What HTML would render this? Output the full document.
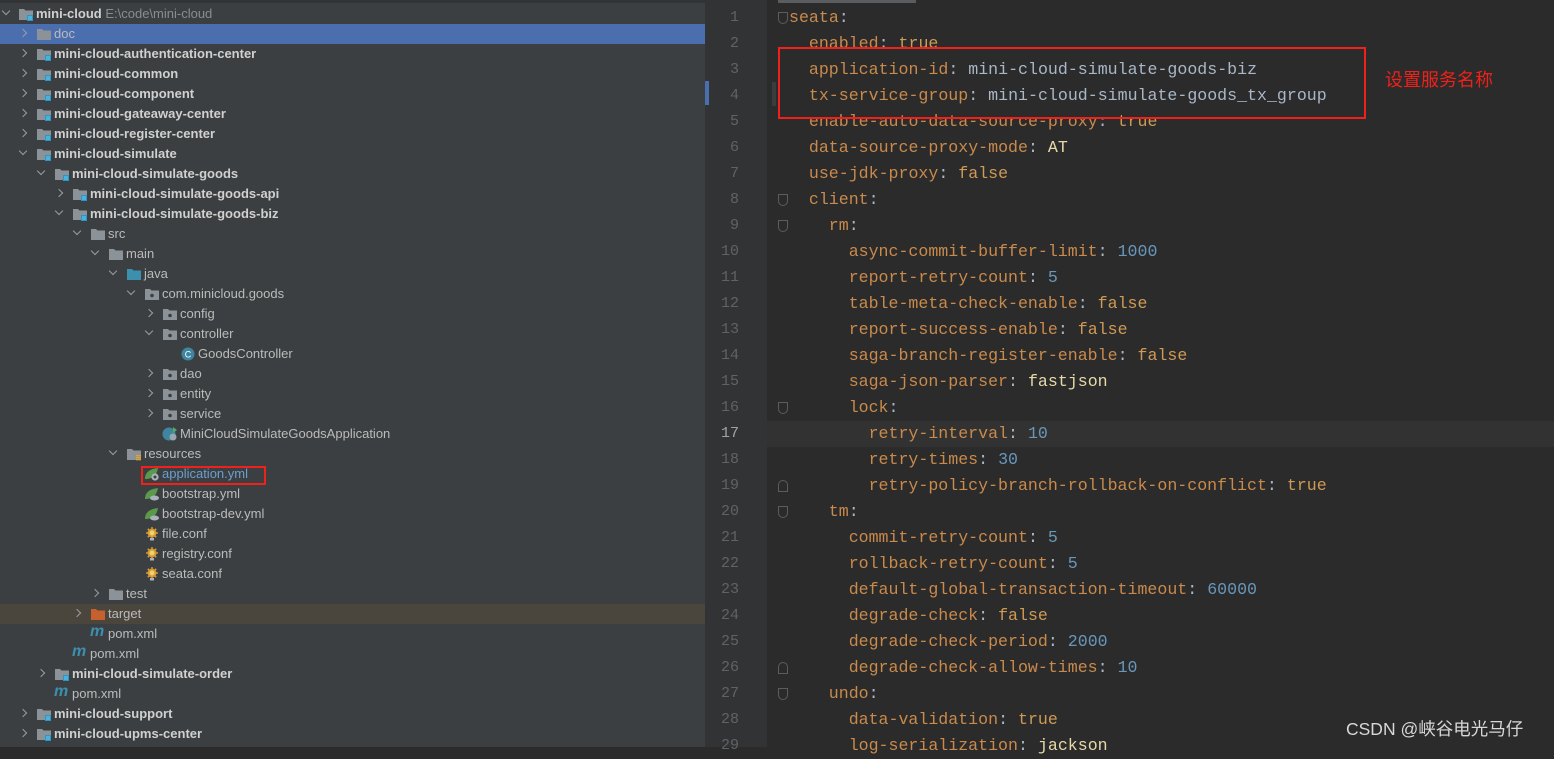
<!DOCTYPE html>
<html><head><meta charset="utf-8">
<style>
*{margin:0;padding:0;box-sizing:border-box}
body{width:1554px;height:747px;overflow:hidden;background:#2b2b2b;position:relative;font-family:"Liberation Sans","Noto Sans CJK SC",sans-serif}
#left{position:absolute;left:0;top:0;width:705px;height:747px;background:#3c3f41;border-top:3px solid #313335}
.row{position:absolute;left:0;width:705px;height:20px;font-size:13px;color:#bbbbbb;line-height:20px;white-space:nowrap}
.row .t{position:absolute;top:0}
.row b{color:#d0d0d0}
.row .arr{position:absolute;top:6px;width:6px;height:6px;border-right:1.5px solid #9a9da0;border-bottom:1.5px solid #9a9da0}
.row svg{position:absolute;top:3px}
#gut{position:absolute;left:705px;top:0;width:62px;height:747px;background:#313335;border-top:3px solid #313335}
.ln{position:absolute;left:705px;width:34px;text-align:right;font-family:"Liberation Mono",monospace;font-size:15px;color:#606366;height:26px;line-height:26px}
.cl{position:absolute;left:789px;height:26px;line-height:26px;font-family:"Liberation Mono",monospace;font-size:16.6px;white-space:pre;color:#a9b7c6}
.k{color:#c98a4c}.n{color:#6897bb}.b{color:#cf9a55}.s{color:#e6d9a8}.v{color:#a9b7c6}
</style></head><body>
<div id="left"></div>
<div id="gut"></div>
<div style="position:absolute;left:705px;top:81px;width:4px;height:24px;background:#4b6eaf"></div>
<div style="position:absolute;left:772px;top:82px;width:4px;height:24px;background:#3a3d40"></div>
<div style="position:absolute;left:767px;top:421px;width:787px;height:26px;background:#323232"></div>
<div style="position:absolute;left:778px;top:0;width:138px;height:3px;background:#5a5d60"></div>
<div id="tree"></div>
<div id="code"></div>
<div style="position:absolute;left:778px;top:47px;width:588px;height:72px;border:2px solid #f0201a"></div>
<div style="position:absolute;left:1385px;top:66px;font-size:18px;color:#f0201a;font-family:'Liberation Sans','Noto Sans CJK SC',sans-serif">设置服务名称</div>
<div style="position:absolute;left:141px;top:466px;width:125px;height:19px;border:2px solid #f0201a"></div>
<div style="position:absolute;left:1346px;top:716px;font-size:17.5px;color:#d8d8d8;font-family:'Liberation Sans','Noto Sans CJK SC',sans-serif">CSDN @峡谷电光马仔</div>
<script>
var F='<svg width="16" height="14" viewBox="0 0 16 14"><path d="M1 2h5l1.5 1.5H15V13H1z" fill="COL"/>EX</svg>';
function ic(t){
 if(t=='m')return F.replace('COL','#8c9398').replace('EX','<rect x="9" y="8" width="6" height="6" fill="#3592c4"/><rect x="10" y="9" width="4" height="4" fill="#40b6e0"/>');
 if(t=='f')return F.replace('COL','#8c9398').replace('EX','');
 if(t=='j')return F.replace('COL','#3d8fae').replace('EX','');
 if(t=='o')return F.replace('COL','#c6612f').replace('EX','');
 if(t=='p')return F.replace('COL','#8c9398').replace('EX','<circle cx="8" cy="8.5" r="1.8" fill="#3c3f41"/>');
 if(t=='r')return F.replace('COL','#8c9398').replace('EX','<rect x="10" y="8" width="5" height="1.3" fill="#e2a32b"/><rect x="10" y="10" width="5" height="1.3" fill="#e2a32b"/><rect x="10" y="12" width="5" height="1.3" fill="#e2a32b"/>');
 if(t=='c')return '<svg width="16" height="14" viewBox="0 0 16 14"><circle cx="8" cy="7" r="6.5" fill="#3e86a0"/><text x="8" y="10.5" font-size="9" text-anchor="middle" fill="#fff" font-family="Liberation Sans">C</text></svg>';
 if(t=='a')return '<svg width="16" height="14" viewBox="0 0 16 14"><circle cx="7" cy="7" r="6.5" fill="#3e86a0"/><path d="M11 0l4 3-4 3z" fill="#59a869"/><circle cx="11" cy="10" r="3.5" fill="#9aa7b0"/></svg>';
 if(t=='y')return '<svg width="16" height="14" viewBox="0 0 16 14"><path d="M1 12C1 5 6 2 14 1c-1 6-4 10-11 11z" fill="#5a9a4a"/><circle cx="11" cy="10" r="3.6" fill="#aab3bb"/><circle cx="11" cy="10" r="1.5" fill="#3c3f41"/></svg>';
 if(t=='s')return '<svg width="16" height="14" viewBox="0 0 16 14"><path d="M1 12C1 5 6 2 14 1c-1 6-4 10-11 11z" fill="#5a9a4a"/><ellipse cx="10.5" cy="11" rx="4.5" ry="2.5" fill="#aab3bb"/></svg>';
 if(t=='g')return '<svg width="16" height="14" viewBox="0 0 16 14"><circle cx="8" cy="6" r="4.5" fill="#d39a35"/><path d="M8 0v12M2 6h12M3.8 1.8l8.4 8.4M12.2 1.8l-8.4 8.4" stroke="#d39a35" stroke-width="1.5"/><circle cx="8" cy="6" r="2.5" fill="#f0d070"/><rect x="6" y="11" width="4" height="2.5" fill="#aab3bb"/></svg>';
 if(t=='x')return '<span style="position:absolute;top:-1px;left:0;font:italic bold 16px Liberation Sans;color:#3d8fae">m</span>';
}
var rows=[
[0,'m','e','<b>mini-cloud</b> <span style="color:#8a8d90">E:\\code\\mini-cloud</span>',36],
[1,'f','c','doc'],
[1,'m','c','<b>mini-cloud-authentication-center</b>'],
[1,'m','c','<b>mini-cloud-common</b>'],
[1,'m','c','<b>mini-cloud-component</b>'],
[1,'m','c','<b>mini-cloud-gateaway-center</b>'],
[1,'m','c','<b>mini-cloud-register-center</b>'],
[1,'m','e','<b>mini-cloud-simulate</b>'],
[2,'m','e','<b>mini-cloud-simulate-goods</b>'],
[3,'m','c','<b>mini-cloud-simulate-goods-api</b>'],
[3,'m','e','<b>mini-cloud-simulate-goods-biz</b>'],
[4,'f','e','src'],[5,'f','e','main'],[6,'j','e','java'],[7,'p','e','com.minicloud.goods'],
[8,'p','c','config'],[8,'p','e','controller'],[9,'c','n','GoodsController'],
[8,'p','c','dao'],[8,'p','c','entity'],[8,'p','c','service'],[8,'a','n','MiniCloudSimulateGoodsApplication'],
[6,'r','e','resources'],[7,'y','n','<span style="color:#6a9fd0">application.yml</span>'],[7,'s','n','bootstrap.yml'],[7,'s','n','bootstrap-dev.yml'],
[7,'g','n','file.conf'],[7,'g','n','registry.conf'],[7,'g','n','seata.conf'],
[5,'f','c','test'],[4,'o','c','target'],[4,'x','n','pom.xml'],[3,'x','n','pom.xml'],
[2,'m','c','<b>mini-cloud-simulate-order</b>'],[2,'x','n','pom.xml'],
[1,'m','c','<b>mini-cloud-support</b>'],[1,'m','c','<b>mini-cloud-upms-center</b>']];
var h='';
rows.forEach(function(r,i){
 var d=r[0],tx=d==0?36:54+18*(d-1),y=4+20*i,bg='';
 if(i==1)bg='background:#4b6eaf;';if(i==30)bg='background:#4a463d;';
 var a='',ax=Math.max(tx-34,3);
 if(r[2]=='c')a='<i class="arr" style="left:'+ax+'px;transform:rotate(-45deg)"></i>';
 if(r[2]=='e')a='<i class="arr" style="left:'+ax+'px;top:4px;transform:rotate(45deg)"></i>';
 h+='<div class="row" style="top:'+y+'px;'+bg+'">'+a+'<span style="position:absolute;left:'+(tx-18)+'px;top:0;width:16px;height:20px">'+ic(r[1])+'</span><span class="t" style="left:'+tx+'px">'+r[3]+'</span></div>';
});
document.getElementById('tree').innerHTML=h;
var K=function(s){return '<span class="k">'+s+'</span><span class="v">:</span>'};
var L=[
[0,K('seata')],[1,K('enabled')+' <span class="b">true</span>'],
[1,K('application-id')+' <span class="v">mini-cloud-simulate-goods-biz</span>'],
[1,K('tx-service-group')+' <span class="v">mini-cloud-simulate-goods_tx_group</span>'],
[1,K('enable-auto-data-source-proxy')+' <span class="b">true</span>'],
[1,K('data-source-proxy-mode')+' <span class="s">AT</span>'],
[1,K('use-jdk-proxy')+' <span class="b">false</span>'],
[1,K('client')],[2,K('rm')],
[3,K('async-commit-buffer-limit')+' <span class="n">1000</span>'],
[3,K('report-retry-count')+' <span class="n">5</span>'],
[3,K('table-meta-check-enable')+' <span class="b">false</span>'],
[3,K('report-success-enable')+' <span class="b">false</span>'],
[3,K('saga-branch-register-enable')+' <span class="b">false</span>'],
[3,K('saga-json-parser')+' <span class="s">fastjson</span>'],
[3,K('lock')],
[4,K('retry-interval')+' <span class="n">10</span>'],
[4,K('retry-times')+' <span class="n">30</span>'],
[4,K('retry-policy-branch-rollback-on-conflict')+' <span class="b">true</span>'],
[2,K('tm')],
[3,K('commit-retry-count')+' <span class="n">5</span>'],
[3,K('rollback-retry-count')+' <span class="n">5</span>'],
[3,K('default-global-transaction-timeout')+' <span class="n">60000</span>'],
[3,K('degrade-check')+' <span class="b">false</span>'],
[3,K('degrade-check-period')+' <span class="n">2000</span>'],
[3,K('degrade-check-allow-times')+' <span class="n">10</span>'],
[2,K('undo')],
[3,K('data-validation')+' <span class="b">true</span>'],
[3,K('log-serialization')+' <span class="s">jackson</span>']];
var c='';
var folds={1:1,8:1,9:1,16:1,19:2,20:1,26:2,27:1};
L.forEach(function(l,i){
 var y=5+26*i,n=i+1;
 c+='<div class="ln" style="top:'+y+'px;'+(n==17?'color:#a4a3a3':'')+'">'+n+'</div>';
 c+='<div class="cl" style="top:'+y+'px;left:'+(789+19.9*l[0])+'px">'+l[1]+'</div>';
 if(folds[n])c+='<div style="position:absolute;left:778px;top:'+(y+7)+'px;width:10px;height:12px;border:1px solid #5a5d60;border-radius:'+(folds[n]==1?'0 0 5px 5px':'5px 5px 0 0')+'"></div>';
});
document.getElementById('code').innerHTML=c;
</script>
</body></html>
